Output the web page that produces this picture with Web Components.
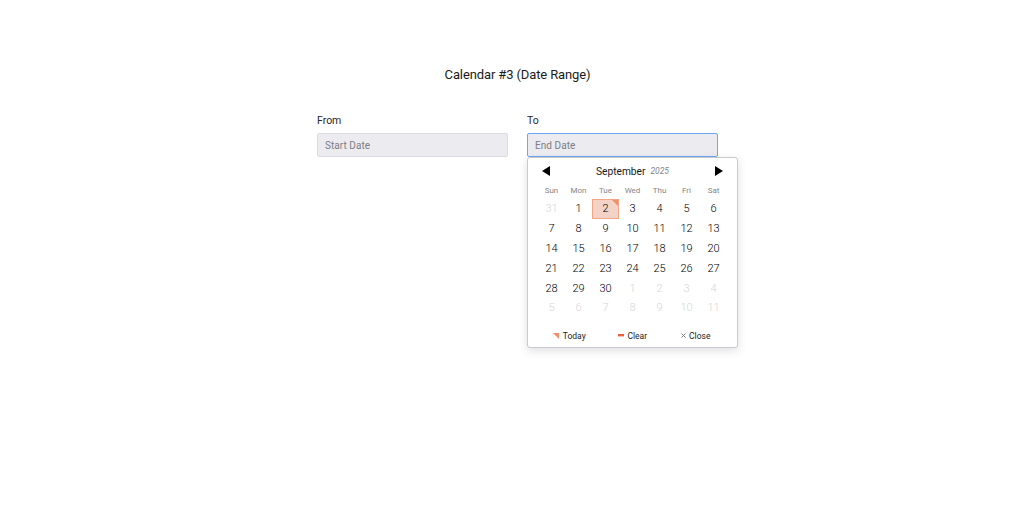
<!DOCTYPE html>
<html>
<head>
<meta charset="utf-8">
<title>Calendar</title>
<style>
html, body { margin: 0; background: #fff; }
body { font-family: Roboto, "Liberation Sans", sans-serif; color: #1f2024; }
</style>
</head>
<body>
<range-page>
  <date-field label="From" placeholder="Start Date"></date-field>
  <date-field label="To" placeholder="End Date" focused>
    <cal-popup></cal-popup>
  </date-field>
</range-page>

<script>
class RangePage extends HTMLElement {
  constructor() {
    super();
    this.attachShadow({ mode: 'open' });
    this.shadowRoot.innerHTML = `
    <style>
    :host { display: block; width: 1024px; height: 528px; overflow: hidden; padding: 66px 0 0 11px; box-sizing: border-box; opacity: .999; }
    h1 { margin: 0; font-size: 13px; line-height: 17px; font-weight: 400; text-align: center; letter-spacing: -.12px; color: #1b1c20; }
    .row { display: flex; gap: 19px; width: 401px; margin: 31px auto 0 auto; }
    </style>
    <h1>Calendar #3 (Date Range)</h1>
    <div class="row"><slot></slot></div>
    `;
  }
}

class DateField extends HTMLElement {
  constructor() {
    super();
    this.attachShadow({ mode: 'open' });
  }
  connectedCallback() {
    const focused = this.hasAttribute('focused');
    this.shadowRoot.innerHTML = `
    <style>
    :host { display: block; position: relative; width: 191px; flex: none; }
    label { display: block; font-size: 10.5px; line-height: 13px; margin: 0 0 6px 0; color: #26272b; }
    .inp { height: 24px; box-sizing: border-box; padding: 0 7px; display: flex; align-items: center; background: #ebebf0; border: 1px solid ${focused ? '#6aa5f8' : '#dcdce3'}; border-radius: 2px; font-size: 10px; color: #7d7e85; letter-spacing: .05px; }
    </style>
    <label>${this.getAttribute('label')}</label>
    <div class="inp">${this.getAttribute('placeholder')}</div>
    <slot></slot>
    `;
  }
}

class CalPopup extends HTMLElement {
  constructor() {
    super();
    this.attachShadow({ mode: 'open' });
    const names = ['Sun', 'Mon', 'Tue', 'Wed', 'Thu', 'Fri', 'Sat'];
    const days = [31];
    for (let i = 1; i <= 30; i++) days.push(i);
    for (let i = 1; i <= 11; i++) days.push(i);
    const cells = days.map((d, i) => {
      const out = i === 0 || i > 30;
      const today = i === 2;
      return `<span class="day${out ? ' out' : ''}${today ? ' today' : ''}">${d}</span>`;
    }).join('');
    this.shadowRoot.innerHTML = `
    <style>
    :host { display: block; position: absolute; left: 0; top: 43px; width: 211px; height: 191px; box-sizing: border-box; background: #fff; border: 1px solid #c9c9ce; border-radius: 3px; box-shadow: 0 3px 8px rgba(60,60,80,.16); padding: 0 10px; z-index: 5; }
    .head { display: flex; align-items: center; justify-content: center; height: 26px; position: relative; }
    .head b { font-weight: 400; font-size: 10.2px; color: #17181b; }
    .head i { font-size: 8.5px; color: #85868c; margin-left: 5px; }
    .arr { position: absolute; top: 8px; width: 0; height: 0; border-top: 5.5px solid transparent; border-bottom: 5.5px solid transparent; }
    .prev { left: 4px; border-right: 8px solid #000; }
    .next { right: 4px; border-left: 8px solid #000; }
    .grid { display: grid; grid-template-columns: repeat(7, 27px); }
    .names { height: 13px; align-items: center; margin: 0 0 2px 0; }
    .names span { font-size: 8px; color: #85868c; text-align: center; }
    .day { height: 19.8px; display: flex; align-items: center; justify-content: center; box-sizing: border-box; font-size: 11px; font-weight: 300; color: #000; position: relative; }
    .out { color: #d6d6da; }
    .today { background: #f4d3c6; border: 1px solid #f0a585; }
    .today::after { content: ''; position: absolute; top: 0; right: 0; width: 0; height: 0; border-top: 6px solid #f0906a; border-left: 6px solid transparent; }
    .foot { display: flex; margin-top: 10px; height: 16px; align-items: center; }
    </style>
    <div class="head">
      <span class="arr prev"></span>
      <b>September</b><i>2025</i>
      <span class="arr next"></span>
    </div>
    <div class="grid names">${names.map(n => `<span>${n}</span>`).join('')}</div>
    <div class="grid">${cells}</div>
    <div class="foot">
      <cal-action kind="today">Today</cal-action>
      <cal-action kind="clear">Clear</cal-action>
      <cal-action kind="close">Close</cal-action>
    </div>
    `;
  }
}

class CalAction extends HTMLElement {
  constructor() {
    super();
    this.attachShadow({ mode: 'open' });
  }
  connectedCallback() {
    const icons = {
      today: '<svg width="6" height="6" viewBox="0 0 6 6"><path d="M0 0H6V6Z" fill="#f0906a"/></svg>',
      clear: '<svg width="6" height="3" viewBox="0 0 6 3"><rect width="6" height="2.4" fill="#ef5f3c"/></svg>',
      close: '<svg width="5" height="5" viewBox="0 0 5 5"><path d="M.5 .5L4.5 4.5M4.5 .5L.5 4.5" stroke="#77787e" stroke-width="1"/></svg>'
    };
    this.shadowRoot.innerHTML = `
    <style>
    :host { display: flex; flex: 1; align-items: center; justify-content: center; gap: 3.5px; font-size: 8.5px; font-weight: 400; color: #1b1c20; }
    </style>
    ${icons[this.getAttribute('kind')]}<slot></slot>
    `;
  }
}

customElements.define('range-page', RangePage);
customElements.define('date-field', DateField);
customElements.define('cal-popup', CalPopup);
customElements.define('cal-action', CalAction);
</script>
</body>
</html>
